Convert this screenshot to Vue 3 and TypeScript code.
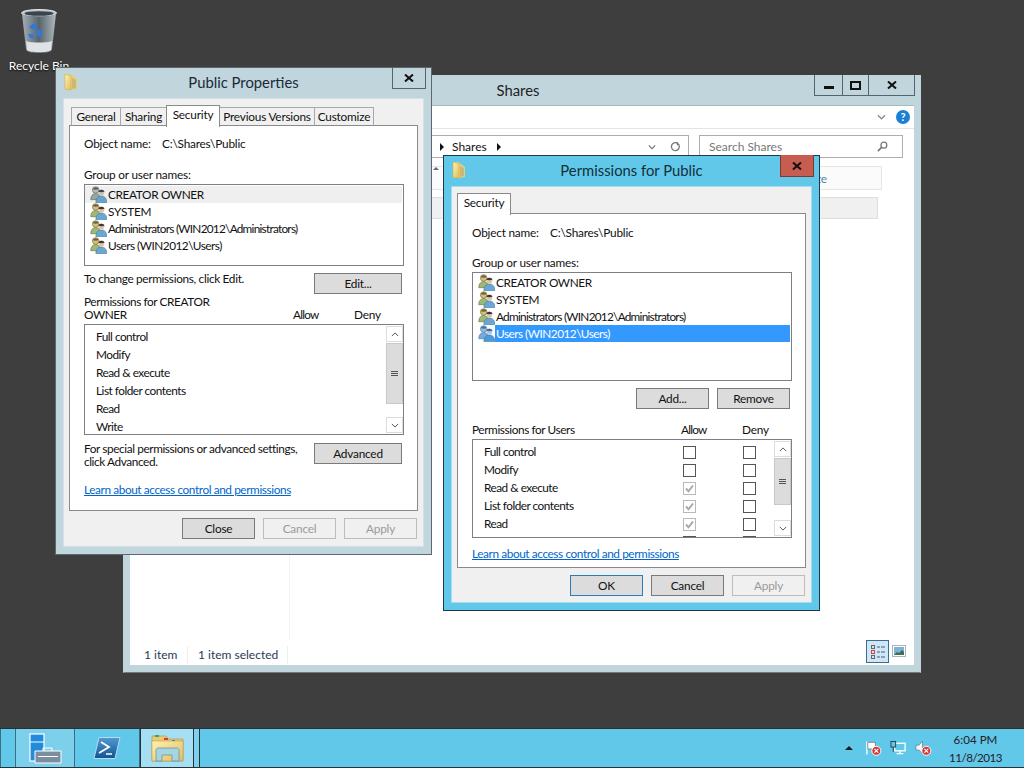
<script setup lang="ts">
interface Perm { id: number; name: string; allow: number }
const principals: string[] = ['CREATOR OWNER', 'SYSTEM', 'Administrators (WIN2012\\Administrators)', 'Users (WIN2012\\Users)']
const leftPerms: string[] = ['Full control', 'Modify', 'Read & execute', 'List folder contents', 'Read', 'Write']
const rightPerms: Perm[] = [
  { id: 1, name: 'Full control', allow: 0 },
  { id: 2, name: 'Modify', allow: 0 },
  { id: 3, name: 'Read & execute', allow: 1 },
  { id: 4, name: 'List folder contents', allow: 1 },
  { id: 5, name: 'Read', allow: 1 },
  { id: 6, name: '', allow: 0 },
]
const leftTabs = [
  { label: 'General', w: 50, active: false },
  { label: 'Sharing', w: 47, active: false },
  { label: 'Security', w: 54, active: true },
  { label: 'Previous Versions', w: 96, active: false },
  { label: 'Customize', w: 60, active: false },
]
const userVariants = [
  { id: 'users-tan', a: '#d4c07c', b: '#9aba76', c: '#e6c3a0', d: '#383838', e: '#68a8d2', h: '#6d6238' },
  { id: 'users-grey', a: '#b9bbb4', b: '#92a998', c: '#cbc4b9', d: '#3f4347', e: '#68a2ca', h: '#5c5f61' },
  { id: 'users-blue', a: '#96bade', b: '#74abdb', c: '#aacae6', d: '#3f6c9a', e: '#4b9bdc', h: '#4575a5' },
]
</script>

<template>
  <div class="desktop">
    <svg class="defs" aria-hidden="true">
      <defs>
        <linearGradient id="fold" x1="0" y1="0" x2="1" y2="1">
          <stop offset="0" stop-color="#fff2b0" />
          <stop offset="1" stop-color="#e2bd5e" />
        </linearGradient>
        <linearGradient id="ps" x1="0" y1="0" x2="0" y2="1">
          <stop offset="0" stop-color="#4f9bd4" />
          <stop offset="1" stop-color="#14528f" />
        </linearGradient>
        <linearGradient id="bin" x1="0" y1="0" x2="1" y2="0">
          <stop offset="0" stop-color="#a4afb5" />
          <stop offset=".5" stop-color="#58646d" />
          <stop offset="1" stop-color="#aeb8bd" />
        </linearGradient>
        <symbol id="folder-s" viewBox="0 0 14 18">
          <path d="M1 1h5l7 5v10l-7 1H1z" fill="#e9cf73" />
          <path d="M1 1l6 2v14l-6-1z" fill="url(#fold)" stroke="#cfae55" stroke-width=".6" />
          <path d="M8 5l4 2v8l-4 1z" fill="#c9b878" />
        </symbol>
        <symbol v-for="v in userVariants" :id="v.id" :key="v.id" viewBox="0 0 18 18">
          <path d="M.8 14.500c0-4 2-6.500 5.200-6.500s5 2.500 5 6.500z" :fill="v.b" :stroke="v.h" stroke-width=".6" />
          <circle cx="6" cy="4.200" r="3.500" :fill="v.a" :stroke="v.h" stroke-width=".6" />
          <path d="M3 3.500c.5-3 5.500-3 6 0-2 .5-4 .5-6 0z" :fill="v.h" />
          <path d="M6.200 17.500c0-4.500 2.300-7 5.800-7s5.800 2.500 5.800 7z" :fill="v.e" stroke="#3f7399" stroke-width=".6" />
          <circle cx="12" cy="6.800" r="3.200" :fill="v.c" />
          <path d="M8.600 6.200c.4-2.800 6.200-3.200 6.800 0-2 .6-4.600.6-6.800 0z" :fill="v.d" />
        </symbol>
      </defs>
    </svg>

    <main class="workspace">
      <div class="icon-recycle">
        <svg class="bin" viewBox="0 0 38 46">
          <ellipse cx="19" cy="5" rx="17.500" ry="3.500" fill="#b9c2c7" stroke="#dfe5e8" />
          <ellipse cx="19" cy="5.500" rx="14.500" ry="2.300" fill="#39444c" />
          <path d="M2 6l4 35c.5 3 6 4 13 4s12.500-1 13-4l4-35c-3 3-30 3-34 0z" fill="url(#bin)" />
          <path d="M6 33c4 2 22 2 26 0l-1 9c-3 3-21 3-24 0z" fill="#dfe3e5" />
          <path d="M9 19l5-4 3 4-4 3zM16 21l5 1 1 6-5 1zM8 26l5 0 1 5-4-1z" fill="#2f79d8" />
        </svg>
        <span>Recycle Bin</span>
      </div>

      <!-- Explorer window -->
      <section class="window explorer">
        <header class="titlebar explorer-title">
          <h1 class="explorer-name">Shares</h1>
          <div class="controls">
            <span class="ctl ctl-min"><i></i></span>
            <span class="ctl ctl-max"><i></i></span>
            <span class="ctl ctl-close"><svg class="x-mark" viewBox="0 0 10 8"><path d="M1 .5l8 7m0-7l-8 7" stroke="#111" stroke-width="2" fill="none" /></svg></span>
          </div>
        </header>
        <div class="explorer-client">
          <div class="ribbon">
            <svg class="rib-chev" viewBox="0 0 10 6"><path d="M1 1l4 4 4-4" fill="none" stroke="#8a8a8a" stroke-width="1.400" /></svg>
            <span class="help">?</span>
          </div>
          <div class="navrow">
            <div class="addr">
              <span class="tri"></span>
              <span class="crumb">Shares</span>
              <span class="tri"></span>
              <span class="addr-fill"></span>
              <svg class="addr-chev" viewBox="0 0 10 6"><path d="M1 1l4 4 4-4" fill="none" stroke="#707070" stroke-width="1.400" /></svg>
              <svg class="refresh" viewBox="0 0 12 12"><path d="M9.800 4a4.300 4.300 0 1 1-1.500-1.900" fill="none" stroke="#777" stroke-width="1.500" /><path d="M7.500 0v4h3.500z" fill="#777" /></svg>
            </div>
            <div class="search">
              <span>Search Shares</span>
              <svg class="mag" viewBox="0 0 12 12"><circle cx="7.500" cy="4.500" r="3.200" fill="none" stroke="#777" stroke-width="1.400" /><path d="M5 7l-4 4" stroke="#777" stroke-width="1.800" /></svg>
            </div>
          </div>
          <div class="browse">
            <div class="side"></div>
            <div class="main">
              <div class="toolbar-box"><span class="sort-tri"></span><span class="cust">Customize</span></div>
              <div class="head-box"></div>
            </div>
          </div>
          <div class="status">
            <span class="st-a">1 item</span>
            <span class="st-b">1 item selected</span>
            <span class="st-fill"></span>
            <span class="view-on">
              <svg viewBox="0 0 16 16" class="view-svg">
                <g fill="none" stroke="#666"><rect x="1.500" y="1.500" width="3" height="3" /><rect x="1.500" y="6.500" width="3" height="3" stroke="#c44" /><rect x="1.500" y="11.500" width="3" height="3" /></g>
                <path d="M7 3h3M11 3h4M7 8h3M11 8h4M7 13h3M11 13h4" stroke="#4a5a78" stroke-width="1" />
              </svg>
            </span>
            <svg viewBox="0 0 14 12" class="view-pic">
              <rect x=".5" y=".5" width="13" height="11" fill="#fff" stroke="#a9b4bb" />
              <rect x="2" y="2" width="10" height="8" fill="#7fb0d6" />
              <path d="M2 10l3-3 2 1 3-3 2 2v3z" fill="#3f6f50" />
            </svg>
          </div>
        </div>
      </section>

      <!-- Public Properties -->
      <section class="window dialog dlg-public">
        <header class="titlebar">
          <svg class="dlg-folder"><use href="#folder-s" /></svg>
          <h2 class="dlg-name">Public Properties</h2>
          <span class="dlg-close"><svg class="x-mark" viewBox="0 0 10 8"><path d="M1 .5l8 7m0-7l-8 7" stroke="#111" stroke-width="2" fill="none" /></svg></span>
        </header>
        <div class="client">
          <div class="tabs tabs-multi">
            <span v-for="t in leftTabs" :key="t.label" class="tab" :class="{ active: t.active }" :style="{ width: t.w + 'px' }">{{ t.label }}</span>
          </div>
          <div class="panel panel-public">
            <div class="obj obj-l"><span class="obj-k">Object name:</span><span>C:\Shares\Public</span></div>
            <div class="lbl lbl-l">Group or user names:</div>
            <div class="list list-users-l">
              <div v-for="(p, i) in principals" :key="p" class="urow" :class="{ hl: i === 0 }">
                <svg class="uicon"><use :href="i === 0 ? '#users-grey' : '#users-tan'" /></svg>
                <span class="utext" :class="'u' + i">{{ p }}</span>
              </div>
            </div>
            <div class="row-btn change">
              <span class="tight">To change permissions, click Edit.</span>
              <button class="btn" type="button">Edit...</button>
            </div>
            <div class="perm-head ph-l">
              <span class="ph-name two">Permissions for CREATOR OWNER</span>
              <span class="ph-allow">Allow</span>
              <span>Deny</span>
            </div>
            <div class="list perm-list pl-l">
              <div class="perm-rows">
                <div v-for="p in leftPerms" :key="p" class="prow">{{ p }}</div>
              </div>
              <div class="sbar">
                <span class="sb-btn"><svg viewBox="0 0 10 6"><path d="M1 5l4-4 4 4" fill="none" stroke="#555" stroke-width="1.200" /></svg></span>
                <span class="sb-thumb thumb-l"><i></i><i></i><i></i></span>
                <span class="sb-track"></span>
                <span class="sb-btn"><svg viewBox="0 0 10 6"><path d="M1 1l4 4 4-4" fill="none" stroke="#555" stroke-width="1.200" /></svg></span>
              </div>
            </div>
            <div class="row-btn special">
              <span class="tight special-t">For special permissions or advanced settings, click Advanced.</span>
              <button class="btn" type="button">Advanced</button>
            </div>
            <a class="link link-l">Learn about access control and permissions</a>
          </div>
          <div class="footer">
            <button class="btn btn-sm" type="button">Close</button>
            <button class="btn btn-sm off" type="button">Cancel</button>
            <button class="btn btn-sm off" type="button">Apply</button>
          </div>
        </div>
      </section>

      <!-- Permissions for Public -->
      <section class="window dialog dlg-perm">
        <header class="titlebar">
          <svg class="dlg-folder"><use href="#folder-s" /></svg>
          <h2 class="dlg-name dark">Permissions for Public</h2>
          <span class="dlg-close red"><svg class="x-mark" viewBox="0 0 10 8"><path d="M1 .5l8 7m0-7l-8 7" stroke="#111" stroke-width="2" fill="none" /></svg></span>
        </header>
        <div class="client client-perm">
          <div class="tabs">
            <span class="tab active sec-tab">Security</span>
          </div>
          <div class="panel panel-perm">
            <div class="obj obj-r"><span class="obj-k">Object name:</span><span>C:\Shares\Public</span></div>
            <div class="lbl lbl-r">Group or user names:</div>
            <div class="list list-users-r">
              <div v-for="(p, i) in principals" :key="p" class="urow">
                <svg class="uicon"><use :href="i === 3 ? '#users-blue' : '#users-tan'" /></svg>
                <span class="utext" :class="['u' + i, { sel: i === 3 }]">{{ p }}</span>
              </div>
            </div>
            <div class="row-end">
              <button class="btn btn-sm" type="button">Add...</button>
              <button class="btn btn-sm" type="button">Remove</button>
            </div>
            <div class="perm-head ph-r">
              <span class="ph-name wide">Permissions for Users</span>
              <span class="ph-allow">Allow</span>
              <span>Deny</span>
            </div>
            <div class="list perm-list pl-r">
              <div class="perm-rows">
                <div v-for="p in rightPerms" :key="p.id" class="prow prow-c">
                  <span class="pname">{{ p.name }}</span>
                  <span class="cb" :class="{ on: p.allow }">
                    <svg v-if="p.allow" viewBox="0 0 11 11"><path d="M2 5.500l2.500 2.800L9 2.500" fill="none" stroke="#a8a8a8" stroke-width="2" /></svg>
                  </span>
                  <span class="cb cb2"></span>
                </div>
              </div>
              <div class="sbar">
                <span class="sb-btn"><svg viewBox="0 0 10 6"><path d="M1 5l4-4 4 4" fill="none" stroke="#555" stroke-width="1.200" /></svg></span>
                <span class="sb-thumb thumb-r"><i></i><i></i><i></i></span>
                <span class="sb-track"></span>
                <span class="sb-btn"><svg viewBox="0 0 10 6"><path d="M1 1l4 4 4-4" fill="none" stroke="#555" stroke-width="1.200" /></svg></span>
              </div>
            </div>
            <a class="link link-r">Learn about access control and permissions</a>
          </div>
          <div class="footer">
            <button class="btn btn-sm default" type="button">OK</button>
            <button class="btn btn-sm" type="button">Cancel</button>
            <button class="btn btn-sm off" type="button">Apply</button>
          </div>
        </div>
      </section>
    </main>

    <footer class="taskbar">
      <span class="tb-start"></span>
      <span class="tb-btn tb-1">
        <svg viewBox="0 0 33 31" class="tb-svg-1">
          <rect x="1" y="1" width="14" height="27" fill="#1f8ddb" stroke="#fff" stroke-width="1.200" />
          <path d="M1 9h14" stroke="#fff" />
          <path d="M6 18h26v12H6z" fill="#7b8e9f" stroke="#fff" />
          <path d="M14 18v-3h9v3" fill="none" stroke="#fff" />
          <path d="M9 23.500h20" stroke="#fff" />
        </svg>
      </span>
      <span class="tb-btn tb-2">
        <svg viewBox="0 0 28 24" class="tb-svg-2">
          <path d="M6 1.500h21L22 22.500H1z" fill="url(#ps)" stroke="#b8d8ee" />
          <path d="M8 6l8 5-10 6" fill="none" stroke="#fff" stroke-width="1.800" />
          <path d="M13 18h6" stroke="#fff" stroke-width="1.500" />
        </svg>
      </span>
      <span class="tb-btn tb-3">
        <svg viewBox="0 0 33 30" class="tb-svg-3">
          <path d="M1 3h14l2 3h15v22H1z" fill="#e8c978" stroke="#b8964a" stroke-width=".7" />
          <rect x="4" y="2" width="4" height="2" fill="#25b24a" />
          <rect x="13" y="5" width="4" height="2" fill="#d8382c" />
          <rect x="21" y="7" width="3" height="2" fill="#1f7fd0" />
          <path d="M1 8h31v20H1z" fill="url(#fold)" stroke="#bd9c50" stroke-width=".6" />
          <path d="M5 28V17c0-1 1-2 2-2h19c1 0 2 1 2 2v11h-7v-6H11v6z" fill="#a6d5e2" stroke="#5c8ea0" stroke-width=".7" />
        </svg>
      </span>
      <span class="tb-sliver"></span>
      <span class="tb-fill"></span>
      <div class="tray">
        <span class="tray-up"></span>
        <svg viewBox="0 0 18 16" class="tray-i">
          <path d="M2 1v14" stroke="#fff" stroke-width="1.400" /><path d="M3 2h8v7H3z" fill="#fff" stroke="#555" stroke-width=".6" />
          <circle cx="12" cy="11" r="4.800" fill="#d63a3a" stroke="#fff" /><path d="M10 9l4 4m0-4l-4 4" stroke="#fff" stroke-width="1.200" />
        </svg>
        <svg viewBox="0 0 18 16" class="tray-i">
          <rect x="5" y="3" width="11" height="8" fill="none" stroke="#fff" stroke-width="1.400" /><path d="M7 14h7M10.500 11v3" stroke="#fff" stroke-width="1.400" />
          <rect x="1" y="1" width="5" height="6" fill="#62c8ea" stroke="#234" stroke-width=".9" /><path d="M3.500 7v5" stroke="#234" />
        </svg>
        <svg viewBox="0 0 18 16" class="tray-i">
          <path d="M1 5h3l4-4v13L4 10H1z" fill="#f2f6f7" stroke="#567" stroke-width=".6" />
          <circle cx="12" cy="11" r="4.800" fill="#d63a3a" stroke="#fff" /><path d="M10 9l4 4m0-4l-4 4" stroke="#fff" stroke-width="1.200" />
        </svg>
        <div class="clock"><span>6:04 PM</span><span class="date">11/8/2013</span></div>
      </div>
    </footer>
  </div>
</template>

<style>
html, body { margin: 0; padding: 0; background: #3e3e3e; }
</style>

<style scoped>
.desktop {
  width: 1024px; height: 768px; overflow: hidden; background: #3e3e3e;
  display: flex; flex-direction: column; position: relative;
  font-family: Lato, "Open Sans", "Liberation Sans", sans-serif; font-size: 11.8px; letter-spacing: -0.2px; color: #111;
}
.defs { position: absolute; width: 0; height: 0; }
.workspace { flex: 1; position: relative; }
h1, h2 { margin: 0; font-weight: 400; }
.x-mark { display: block; width: 10px; height: 8px; }

.icon-recycle { position: absolute; left: 0; top: 0; width: 78px; display: flex; flex-direction: column; align-items: center; color: #fff; font-size: 12px; line-height: 16px; letter-spacing: 0; text-shadow: 0 1px 2px #000; }
.bin { width: 38px; height: 46px; margin-top: 8px; margin-bottom: 4px; }

.window { position: absolute; box-sizing: border-box; border: 1px solid #5d686c; background: #c1d5dc; display: flex; flex-direction: column; }
.titlebar { position: relative; height: 30px; display: flex; align-items: center; justify-content: center; flex: none; }

/* Explorer */
.explorer { left: 123px; top: 75px; width: 798px; height: 598px; border-color: #c1d5dc #c1d5dc #6f7a7e #c1d5dc; }
.explorer-title { height: 29px; padding: 0 8px 2px 0; box-sizing: border-box; }
.explorer-name { font-size: 14.8px; letter-spacing: 0; color: #222; }
.controls { position: absolute; top: -1px; right: 5px; height: 21px; display: flex; border: 1px solid #55636a; border-top: 0; box-sizing: border-box; }
.ctl { display: flex; align-items: center; justify-content: center; box-sizing: border-box; color: #111; }
.ctl-min { width: 28px; border-right: 1px solid #55636a; }
.ctl-min i { display: block; width: 10px; height: 3px; background: #111; margin-top: 5px; }
.ctl-max { width: 26px; border-right: 1px solid #55636a; }
.ctl-max i { display: block; width: 7px; height: 5px; border: 2px solid #111; }
.ctl-close { width: 45px; }
.explorer-client { flex: 1; margin: 0 6px 7px; background: #fff; display: flex; flex-direction: column; border-top: 1px solid #a9b8be; min-height: 0; }
.ribbon { height: 23px; flex: none; border-bottom: 1px solid #e4e4e4; display: flex; align-items: center; justify-content: flex-end; padding-right: 4px; box-sizing: border-box; }
.rib-chev { width: 9px; height: 6px; margin-right: 10px; }
.help { width: 14px; height: 14px; border-radius: 50%; background: #1b7fd4; color: #fff; font-weight: 700; font-size: 11px; line-height: 14px; text-align: center; }
.navrow { height: 28px; flex: none; padding-top: 6px; display: flex; justify-content: flex-end; padding-right: 11px; }
.addr { width: 475px; height: 23px; box-sizing: border-box; border: 1px solid #adadad; display: flex; align-items: center; padding-left: 225px; font-size: 12px; letter-spacing: 0; }
.tri { width: 0; height: 0; border-left: 4px solid #111; border-top: 4px solid transparent; border-bottom: 4px solid transparent; }
.crumb { margin: 0 10px 0 8px; }
.addr-fill { flex: 1; }
.addr-chev { width: 8px; height: 6px; margin-right: 14px; }
.refresh { width: 11px; height: 12px; margin-right: 7px; }
.search { width: 204px; height: 23px; margin-left: 10px; box-sizing: border-box; border: 1px solid #adadad; display: flex; align-items: center; justify-content: space-between; padding: 0 14px 0 9px; color: #777; font-size: 12px; letter-spacing: 0; }
.mag { width: 11px; height: 11px; }
.browse { flex: 1; display: flex; min-height: 0; }
.side { width: 159px; border-right: 1px solid #f2f2f2; flex: none; }
.main { flex: 1; padding: 3px 32px 0 0; display: flex; flex-direction: column; align-items: flex-end; }
.toolbar-box { width: 100%; height: 24px; box-sizing: border-box; border: 1px solid #e6e6e6; background: #fbfbfb; display: flex; align-items: center; justify-content: space-between; padding: 0 54px 0 142px; color: #4f87a6; font-size: 12px; }
.sort-tri { width: 0; height: 0; border-left: 3px solid transparent; border-right: 3px solid transparent; border-bottom: 3px solid #5a6f85; margin-top: -20px; }
.head-box { width: calc(100% - 4px); margin-right: 4px; height: 22px; margin-top: 7px; box-sizing: border-box; border: 1px solid #dedede; background: #f0f0f0; }
.status { height: 25px; flex: none; display: flex; align-items: center; font-size: 12px; letter-spacing: 0; color: #2b3a55; padding-right: 8px; box-sizing: border-box; }
.st-a { margin-left: 14px; width: 43px; border-right: 1px solid #eee; height: 18px; line-height: 18px; margin-top: 4px; }
.st-b { margin-left: 10px; width: 89px; border-right: 1px solid #eee; height: 18px; line-height: 18px; margin-top: 4px; }
.st-fill { flex: 1; }
.view-on { width: 23px; height: 23px; box-sizing: border-box; border: 1px solid #3c6d8f; background: #cfe6f6; display: flex; align-items: center; justify-content: center; margin-top: -2px; }
.view-svg { width: 16px; height: 16px; }
.view-pic { width: 14px; height: 12px; margin-left: 3px; margin-top: -3px; }

/* Dialogs */
.dialog { box-shadow: none; }
.dlg-public { left: 55px; top: 67px; width: 377px; height: 488px; }
.dlg-perm { left: 443px; top: 155px; width: 377px; height: 456px; background: #62c8ea; border-color: #1c3a4d; }
.dlg-folder { position: absolute; left: 8px; top: 5px; width: 14px; height: 18px; }
.dlg-name { font-size: 14.8px; letter-spacing: 0; color: #1a2a3a; padding-bottom: 2px; }
.dlg-name.dark { color: #12303a; }
.dlg-close { position: absolute; top: -1px; right: 5px; width: 34px; height: 22px; box-sizing: border-box; border: 1px solid #55636a; border-top: 0; display: flex; align-items: center; justify-content: center; }
.dlg-close.red { background: #c75c50; border-color: #7a3a33; }
.client { flex: 1; background: #f0f0f0; margin: 0 7px 7px; padding: 0 5px; box-sizing: border-box; border: 1px solid #d4e0e5; display: flex; flex-direction: column; min-height: 0; }
.client-perm { border-color: #a5dcef; }
.tabs { margin-top: 6px; height: 21px; display: flex; flex: none; align-items: flex-end; position: relative; z-index: 1; white-space: nowrap; }
.tabs-multi { padding-left: 2px; }
.tab { box-sizing: border-box; height: 19px; line-height: 17px; text-align: center; background: #f0f0f0; border: 1px solid #a8a8a8; border-bottom: 1px solid #8a8a8a; margin-left: -1px; }
.tabs-multi .tab:first-child { margin-left: 0; }
.tab.active { height: 22px; background: #fff; border-color: #8a8a8a; border-bottom: 0; line-height: 18px; align-self: flex-start; position: relative; z-index: 2; margin-bottom: -1px; }
.sec-tab { width: 54px; margin-left: 0; }
.panel { box-sizing: border-box; background: #fff; border: 1px solid #8a8a8a; margin-top: -1px; flex: none; padding-left: 14px; }
.panel-public { height: 386px; padding-top: 10px; }
.panel-perm { height: 355px; padding-top: 11px; }
.obj { height: 16px; line-height: 16px; display: flex; }
.obj-l { position: relative; top: 0; }
.obj-k { width: 78px; flex: none; }
.lbl { height: 16px; line-height: 16px; }
.lbl-l { margin-top: 15px; }
.lbl-r { margin-top: 14px; }
.list { width: 320px; box-sizing: border-box; border: 1px solid #7c7f85; margin-top: 1px; padding-top: 1px; overflow: hidden; background: #fff; }
.list-users-l { height: 82px; }
.list-users-r { height: 109px; }
.urow { height: 17px; display: flex; align-items: center; padding-left: 5px; margin-right: 1px; }
.urow.hl { background: #efefef; }
.uicon { width: 17px; height: 17px; flex: none; }
.utext { height: 17px; line-height: 17px; padding-left: 1px; flex: 1; white-space: nowrap; }
.utext.u0 { letter-spacing: -0.35px; }
.utext.u2 { letter-spacing: -0.74px; }
.utext.u3 { letter-spacing: -0.5px; }
.utext.sel { background: #3399ff; color: #fff; }
.row-btn { width: 318px; display: flex; justify-content: space-between; align-items: flex-start; }
.change { margin-top: 7px; height: 21px; }
.tight { line-height: 13px; letter-spacing: -0.32px; margin-top: -1px; }
.special { margin-top: 8px; height: 26px; }
.special-t { width: 225px; letter-spacing: -0.4px; }
.btn { font: inherit; letter-spacing: inherit; color: #111; background: #dcdcdc; border: 1px solid #7a7a7a; width: 88px; height: 21px; padding: 0; line-height: 18px; box-sizing: border-box; }
.btn-sm { width: 73px; }
.btn.off { background: #f0f0f0; border-color: #bcbcbc; color: #9a9a9a; }
.btn.default { border-color: #2b7db8; }
.perm-head { display: flex; align-items: flex-end; width: 318px; }
.ph-l { margin-top: 1px; height: 26px; }
.ph-r { margin-top: 13px; height: 14px; }
.ph-name { flex: none; line-height: 13px; letter-spacing: -0.4px; }
.two { width: 209px; padding-right: 70px; box-sizing: border-box; }
.wide { width: 209px; line-height: 14px; }
.ph-allow { width: 61px; flex: none; letter-spacing: -0.8px; }
.ph-l span, .ph-r span { line-height: 13px; }
.perm-list { display: flex; padding: 0; }
.pl-l { height: 111px; margin-top: 3px; }
.pl-r { height: 99px; margin-top: 3px; }
.perm-rows { flex: 1; padding-top: 3px; min-width: 0; }
.prow { height: 18px; line-height: 18px; padding-left: 11px; letter-spacing: -0.5px; }
.prow-c { display: flex; align-items: center; }
.pname { width: 199px; flex: none; }
.cb { width: 13px; height: 13px; flex: none; box-sizing: border-box; border: 1px solid #555; display: block; }
.cb.on { border-color: #b9b9b9; }
.cb svg { display: block; width: 11px; height: 11px; }
.cb2 { margin-left: 47px; }
.sbar { width: 17px; flex: none; display: flex; flex-direction: column; padding: 1px 0; box-sizing: border-box; }
.sb-btn { height: 16px; flex: none; box-sizing: border-box; border: 1px solid #dcdcdc; display: flex; align-items: center; justify-content: center; }
.sb-btn svg { width: 8px; height: 5px; }
.sb-thumb { flex: none; background: #dcdcdc; border: 1px solid #c8c8c8; box-sizing: border-box; display: flex; flex-direction: column; align-items: center; justify-content: center; gap: 1px; }
.sb-thumb i { display: block; width: 7px; height: 1px; background: #555; }
.thumb-l { height: 61px; margin-top: 1px; }
.thumb-r { height: 47px; margin-top: 1px; }
.sb-track { flex: 1; }
.link { display: block; width: max-content; color: #0066cc; text-decoration: underline; line-height: 14px; letter-spacing: -0.4px; }
.link-l { margin-top: 14px; }
.link-r { margin-top: 9px; }
.footer { margin-top: 7px; display: flex; justify-content: flex-end; gap: 8px; padding-right: 1px; flex: none; }
.row-end { width: 318px; display: flex; justify-content: flex-end; gap: 8px; margin-top: 7px; }

/* Taskbar */
.taskbar { height: 40px; flex: none; box-sizing: border-box; background: #62c8ea; border-top: 1px solid #26323a; border-bottom: 1px solid #26323a; display: flex; align-items: stretch; }
.tb-start { width: 16px; box-sizing: border-box; border-left: 1px solid #3b6e82; border-right: 1px solid #3b6e82; flex: none; }
.tb-btn { display: flex; align-items: center; justify-content: center; flex: none; box-sizing: border-box; }
.tb-1 { width: 59px; background: #7cd0ec; border-right: 1px solid #3b6e82; }
.tb-svg-1 { width: 33px; height: 31px; }
.tb-2 { width: 65px; border-right: 1px solid #3b6e82; }
.tb-svg-2 { width: 28px; height: 24px; }
.tb-3 { width: 54px; background: #a5dff3; border-right: 1px solid #26323a; border-left: 1px solid #26323a; }
.tb-svg-3 { width: 33px; height: 30px; }
.tb-sliver { width: 5px; background: #7cd0ec; border-right: 1px solid #26323a; flex: none; }
.tb-fill { flex: 1; }
.tray { display: flex; align-items: center; color: #222; }
.tray-up { width: 0; height: 0; border-left: 4px solid transparent; border-right: 4px solid transparent; border-bottom: 4px solid #1a1a1a; margin-right: 12px; }
.tray-i { width: 17px; height: 16px; margin-right: 8px; }
.tray-i:last-of-type { margin-right: 0; }
.clock { width: 87px; margin-right: 5px; padding-top: 2px; display: flex; flex-direction: column; align-items: center; font-size: 11.6px; letter-spacing: 0; line-height: 18px; }
.date { letter-spacing: -0.5px; }
</style>
